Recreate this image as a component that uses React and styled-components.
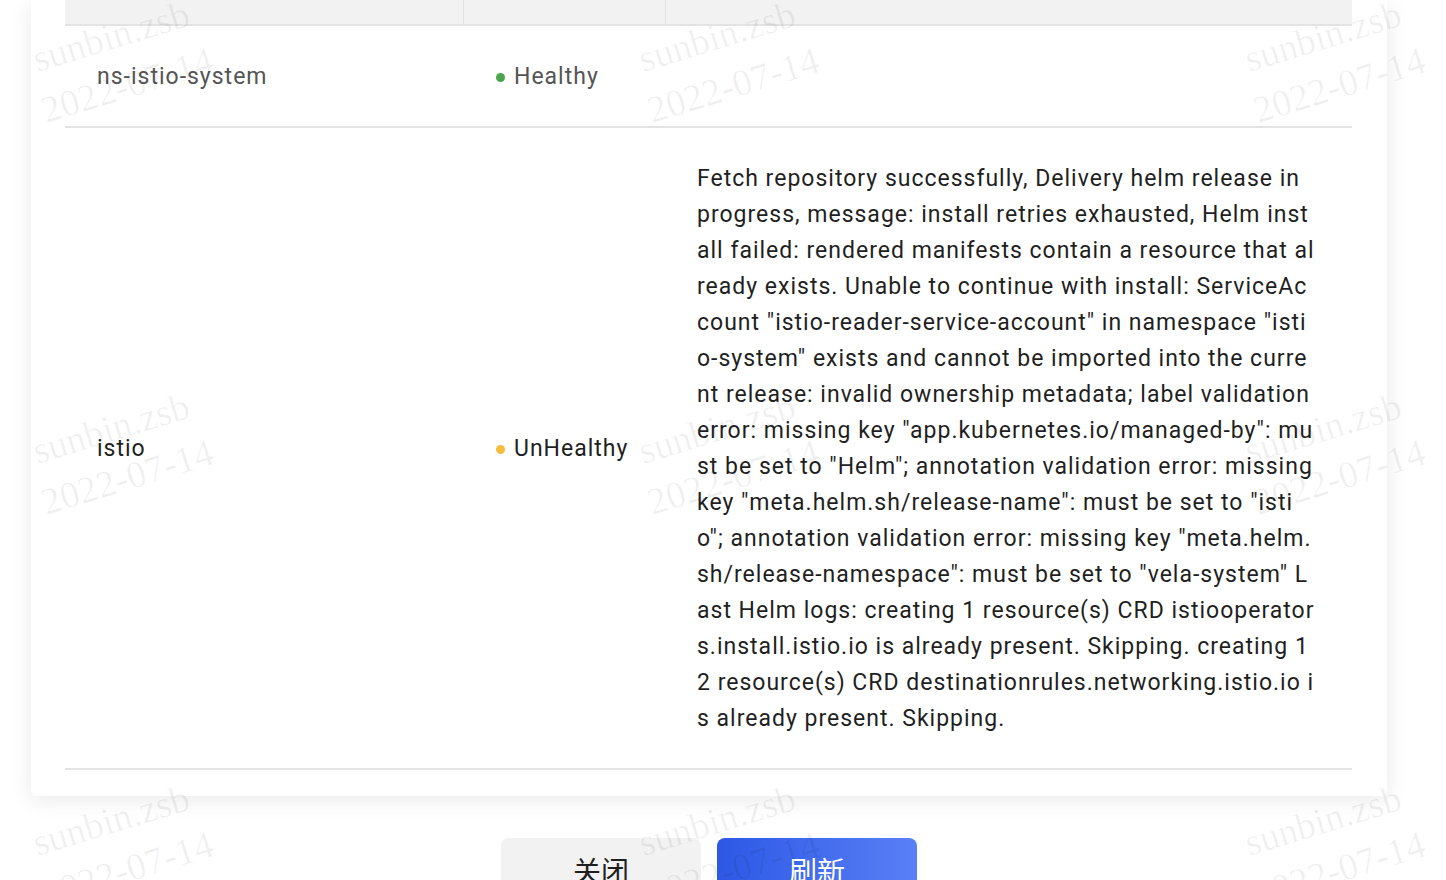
import React from 'react';
import styled, { createGlobalStyle } from 'styled-components';

const GlobalStyle = createGlobalStyle`
  html, body {
    margin: 0;
    padding: 0;
    background: #ffffff;
    font-family: Roboto, Inter, "Noto Sans CJK SC", sans-serif;
    overflow: hidden;
  }
`;

const rows = [
  {
    name: 'ns-istio-system',
    status: 'Healthy',
    message: '',
    muted: true,
  },
  {
    name: 'istio',
    status: 'UnHealthy',
    message:
      'Fetch repository successfully, Delivery helm release in progress, message: install retries exhausted, Helm install failed: rendered manifests contain a resource that already exists. Unable to continue with install: ServiceAccount "istio-reader-service-account" in namespace "istio-system" exists and cannot be imported into the current release: invalid ownership metadata; label validation error: missing key "app.kubernetes.io/managed-by": must be set to "Helm"; annotation validation error: missing key "meta.helm.sh/release-name": must be set to "istio"; annotation validation error: missing key "meta.helm.sh/release-namespace": must be set to "vela-system" Last Helm logs: creating 1 resource(s) CRD istiooperators.install.istio.io is already present. Skipping. creating 12 resource(s) CRD destinationrules.networking.istio.io is already present. Skipping.',
    muted: false,
  },
];

const App = () => (
  <Page>
    <GlobalStyle />
    <Card>
      <Table>
        <HeadRow>
          <HeadCell />
          <HeadCell />
          <HeadCell last />
        </HeadRow>
        {rows.map((row) => (
          <Row key={row.name}>
            <NameCell muted={row.muted}>{row.name}</NameCell>
            <StatusCell muted={row.muted}>
              <Dot healthy={row.status === 'Healthy'} />
              {row.status}
            </StatusCell>
            <MessageCell>{row.message}</MessageCell>
          </Row>
        ))}
      </Table>
    </Card>
    <Footer>
      <Button>关闭</Button>
      <Button primary>刷新</Button>
    </Footer>
    <Watermark>
      {[0, 1, 2].map((r) =>
        [0, 1, 2].map((c) => (
          <Tile key={`${r}-${c}`} style={{ left: c * 606, top: r * 392 }}>
            <Mark top={36} left={111}>sunbin.zsb</Mark>
            <Mark top={85} left={127}>2022-07-14</Mark>
          </Tile>
        ))
      )}
    </Watermark>
  </Page>
);

export default App;

const Page = styled.div`
  position: relative;
  width: 1446px;
  height: 880px;
  overflow: hidden;
  background: #fff;
`;

const Card = styled.div`
  margin-left: 31px;
  width: 1356px;
  box-sizing: border-box;
  padding: 0 35px 26px 34px;
  background: #fff;
  border-radius: 0 0 6px 6px;
  box-shadow: 0 4px 22px rgba(0, 0, 0, 0.09);
`;

const Table = styled.div`
  display: grid;
  grid-template-columns: 399px 202px 1fr;
`;

const HeadRow = styled.div`
  display: contents;
`;

const HeadCell = styled.div`
  height: 24px;
  background: #f2f2f2;
  border-bottom: 2px solid #e3e3e3;
  border-right: ${(p) => (p.last ? 'none' : '1px solid #e2e2e2')};
`;

const Row = styled.div`
  display: contents;
`;

const Cell = styled.div`
  display: flex;
  align-items: center;
  padding: 33px 32px 31px;
  border-bottom: 2px solid #e3e3e3;
  font-size: 23px;
  line-height: 36px;
  letter-spacing: 1px;
`;

const NameCell = styled(Cell)`
  color: ${(p) => (p.muted ? '#555555' : '#1f1f1f')};
`;

const StatusCell = styled(Cell)`
  gap: 9px;
  color: ${(p) => (p.muted ? '#555555' : '#1f1f1f')};
`;

const MessageCell = styled(Cell)`
  padding-left: 31px;
  padding-right: 36px;
  color: #1f1f1f;
  word-break: break-all;
`;

const Dot = styled.span`
  width: 9px;
  height: 9px;
  border-radius: 50%;
  flex: none;
  background: ${(p) => (p.healthy ? '#4ca54a' : '#f6bd3c')};
`;

const Footer = styled.div`
  display: flex;
  justify-content: center;
  gap: 16px;
  margin-left: 31px;
  width: 1356px;
  margin-top: 42px;
`;

const Button = styled.button`
  width: 200px;
  height: 64px;
  border: none;
  border-radius: 8px;
  font-family: "Noto Sans CJK SC", sans-serif;
  font-size: 28px;
  color: ${(p) => (p.primary ? '#ffffff' : '#1f1f1f')};
  background: ${(p) => (p.primary ? 'linear-gradient(90deg, #2c58e5 0%, #5a80f6 100%)' : '#f2f2f2')};
`;

const Watermark = styled.div`
  position: absolute;
  inset: 0;
  pointer-events: none;
  z-index: 10;
`;

const Tile = styled.div`
  position: absolute;
  width: 606px;
  height: 392px;
`;

const Mark = styled.span`
  position: absolute;
  top: ${(p) => p.top}px;
  left: ${(p) => p.left}px;
  transform: translate(-50%, -50%) rotate(-17deg);
  font-family: "Liberation Serif", serif;
  font-size: 38px;
  white-space: nowrap;
  color: rgba(0, 0, 0, 0.06);
`;
